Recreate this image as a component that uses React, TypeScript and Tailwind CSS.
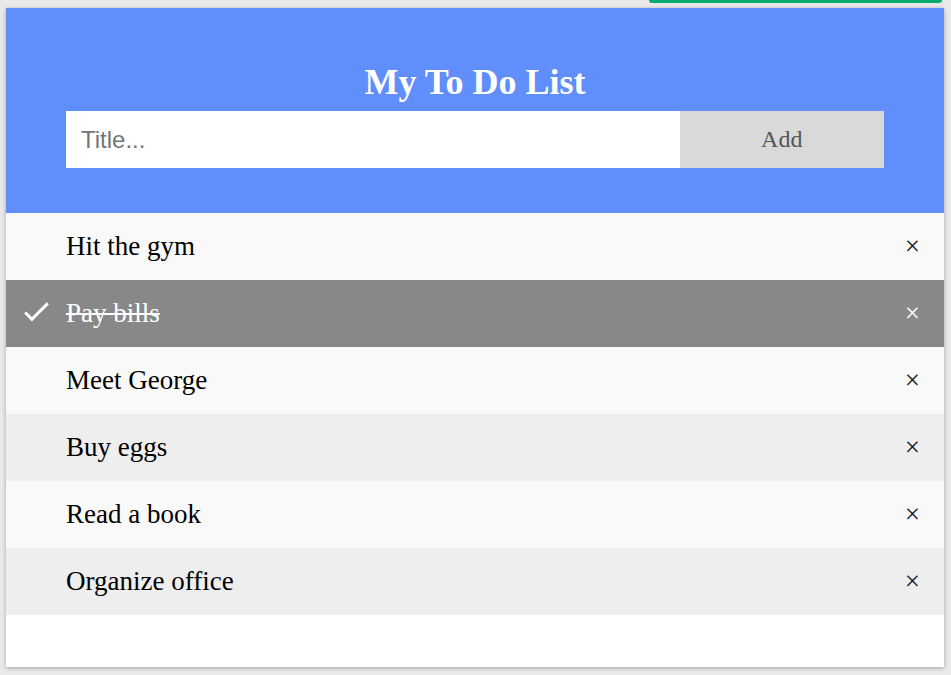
import React from "react";

const items = [
  { t: "Hit the gym", bg: "bg-[#f9f9f9]", checked: false },
  { t: "Pay bills", bg: "bg-[#888888]", checked: true },
  { t: "Meet George", bg: "bg-[#f9f9f9]", checked: false },
  { t: "Buy eggs", bg: "bg-[#eeeeee]", checked: false },
  { t: "Read a book", bg: "bg-[#f9f9f9]", checked: false },
  { t: "Organize office", bg: "bg-[#eeeeee]", checked: false },
];

export default function App() {
  return (
    <div className="relative min-h-screen bg-[#e9e9e9] pt-[8px] pl-[6px] pr-[7px] pb-[8px]" style={{ fontFamily: '"Liberation Serif", "Times New Roman", serif' }}>
      <div className="absolute top-0 left-[649px] w-[293px] h-[3px] rounded-b-[4px] bg-[#04aa6d]" />
      <div className="w-[938px] h-[659px] bg-white shadow-[0_1px_4px_rgba(0,0,0,0.3)]">
        <div className="bg-[#608efa] pt-[45px] pb-[45px] px-[60px] text-center text-white">
          <h2 className="m-[7.5px] mt-[8px] text-[36px] font-bold leading-[42px]">My To Do List</h2>
          <div className="flex">
            <input
              type="text"
              placeholder="Title..."
              className="w-3/4 p-[15px] text-[24px] leading-[27.5px] bg-white text-black placeholder:text-[#757575] outline-none border-0"
              style={{ fontFamily: '"Liberation Sans", Arial, sans-serif' }}
            />
            <span className="w-1/4 p-[15px] text-[24px] leading-[27px] bg-[#d9d9d9] text-[#555555] text-center">Add</span>
          </div>
        </div>
        <ul>
          {items.map((it) => (
            <li key={it.t} className={`relative flex items-center h-[67px] pl-[60px] text-[27px] ${it.bg} ${it.checked ? "text-white" : "text-black"}`}>
              {it.checked && (
                <span className="absolute left-[25px] top-[17px] w-[11px] h-[24px] border-white border-solid border-r-[3px] border-b-[3px] rotate-45" />
              )}
              <span className={it.checked ? "line-through" : ""}>{it.t}</span>
              <span className={`ml-auto pr-[24px] ${it.checked ? "text-white" : "text-[#1a1a2e]"}`}>×</span>
            </li>
          ))}
        </ul>
      </div>
    </div>
  );
}
